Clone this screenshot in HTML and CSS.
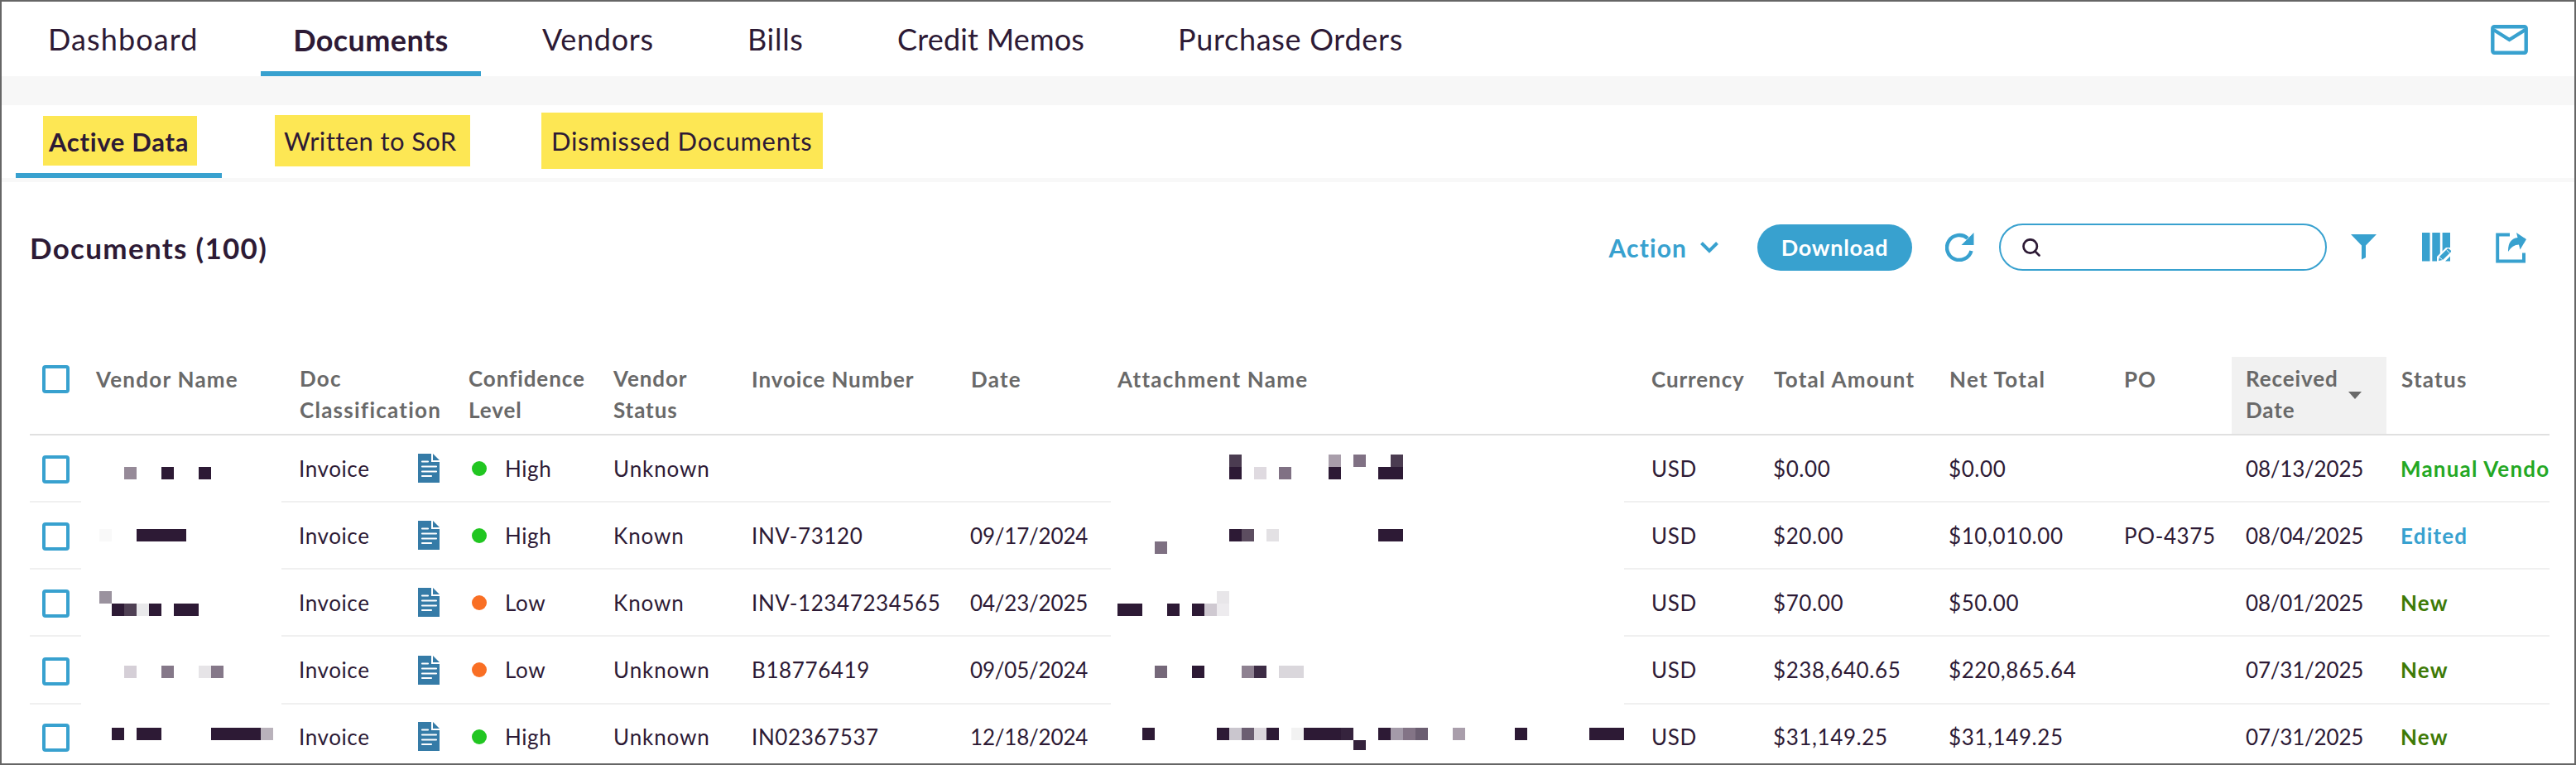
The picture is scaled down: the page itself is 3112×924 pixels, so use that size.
FILE: index.html
```html
<!DOCTYPE html>
<html lang="en">
<head>
    <meta charset="UTF-8">
    <meta name="viewport" content="width=device-width, initial-scale=1.0">
    <title>Documents</title>
    <link rel="stylesheet" href="styles.css">
</head>
<body>
    <svg class="sprite" aria-hidden="true">
        <symbol id="doc" viewBox="0 0 26 35">
            <path d="M0 0H16V10H26V35H0Z" fill="#357ba7"/>
            <path d="M18 0L26 8H18Z" fill="#357ba7"/>
            <path d="M5 9.5h7M5 15.500h17M5 21.500h17M5 27h11" stroke="#fff" stroke-width="2.200" stroke-linecap="round"/>
        </symbol>
    </svg>
    <div class="app">
        <nav class="nav">
            <a class="wide">Dashboard</a>
            <a class="active">Documents</a>
            <a>Vendors</a>
            <a>Bills</a>
            <a class="tight">Credit Memos</a>
            <a>Purchase Orders</a>
            <svg class="mail" viewBox="0 0 45 36" fill="none" stroke="#38a1cf" stroke-width="4.400">
                <rect x="2.300" y="2.300" width="40.400" height="31.400" rx="2"/>
                <path d="M3.500 6L22.500 18L41.500 6"/>
            </svg>
        </nav>
        <div class="band"></div>
        <div class="subtabs">
            <div class="tab active"><span class="mark mark-active">Active Data</span></div>
            <div class="tab"><span class="mark mark-written">Written to SoR</span></div>
            <div class="tab"><span class="mark mark-dismissed">Dismissed Documents</span></div>
        </div>

        <div class="toolbar">
            <h1>Documents (100)</h1>
            <div class="action">Action
                <svg width="22" height="14" viewBox="0 0 22 14" fill="none" stroke="#38a1cf" stroke-width="4"><path d="M1.500 1.500L11 11L20.500 1.500"/></svg>
            </div>
            <button class="download">Download</button>
            <svg class="refresh" width="35" height="35" viewBox="0 0 35 35">
                <path d="M27 6.800A15 15 0 1 0 31.500 22" fill="none" stroke="#38a1cf" stroke-width="4.400"/>
                <path d="M34.500 0V15H19.500Z" fill="#38a1cf"/>
            </svg>
            <div class="search">
                <svg width="22" height="22" viewBox="0 0 22 22" fill="none" stroke="#2d1a35" stroke-width="2.700"><circle cx="9.700" cy="9.500" r="8.200"/><path d="M15.500 15.500L20.500 20.500" stroke-linecap="round"/></svg>
            </div>
            <svg class="filter" width="31" height="31" viewBox="0 0 31 31"><path d="M0 0H31L18 13.500V28L13 30.500V13.500Z" fill="#38a1cf"/></svg>
            <svg class="columns" width="36" height="35" viewBox="0 0 36 35">
                <path d="M0 0H9.500V34.500H0ZM12.300 0H21.800V34.500H12.300ZM24.600 0H34V34.500H24.600Z" fill="#38a1cf"/>
                <path d="M18 36V29L29 18H36V36Z" fill="#fff"/>
                <path d="M20 34L21 29L30.500 19.500Q31.500 18.700 32.500 19.500L34.700 21.600Q35.500 22.600 34.700 23.500L25 33Z" fill="#38a1cf"/>
                <path d="M29.500 20.800L33.500 24.700M21 29.500L24.800 33" stroke="#fff" stroke-width="1"/>
                <path d="M28 34.500L34 28.500V34.500Z" fill="#38a1cf"/>
            </svg>
            <svg class="export" width="37" height="37" viewBox="0 0 37 37">
                <path d="M17 2.500H2.200V34.500H34V24.500" fill="none" stroke="#38a1cf" stroke-width="4"/>
                <path d="M25 0L37 8L29.500 20.500L28 14.500Q20 14.500 15 23Q14.500 7.500 26.500 6Z" fill="#38a1cf"/>
            </svg>
        </div>

        <div class="table-wrap">
            <table>
                <colgroup>
                    <col class="c-check"><col class="c-vendor"><col class="c-doc"><col class="c-conf"><col class="c-vstatus"><col class="c-inv"><col class="c-date"><col class="c-att"><col class="c-cur"><col class="c-total"><col class="c-net"><col class="c-po"><col class="c-recv"><col class="c-status">
                </colgroup>
                <thead>
                    <tr>
                        <th><span class="box"></span></th>
                        <th class="single">Vendor Name</th>
                        <th>Doc<br>Classification</th>
                        <th class="narrow">Confidence<br>Level</th>
                        <th class="narrow">Vendor<br>Status</th>
                        <th class="single narrow">Invoice Number</th>
                        <th class="single">Date</th>
                        <th class="single">Attachment Name</th>
                        <th class="single narrow">Currency</th>
                        <th class="single">Total Amount</th>
                        <th class="single">Net Total</th>
                        <th class="single narrow">PO</th>
                        <th class="sorted narrow"><div class="sort">Received<br>Date<span class="caret"></span></div></th>
                        <th class="single">Status</th>
                    </tr>
                </thead>
                <tbody>
                    <tr>
                        <td><span class="box"></span></td>
                        <td></td>
                        <td><div class="doc">Invoice <svg><use href="#doc"/></svg></div></td>
                        <td><div class="level"><i class="dot high"></i>High</div></td>
                        <td class="vs">Unknown</td>
                        <td></td>
                        <td></td>
                        <td></td>
                        <td>USD</td>
                        <td>$0.00</td>
                        <td>$0.00</td>
                        <td></td>
                        <td class="date">08/13/2025</td>
                        <td class="status manual">Manual Vendo</td>
                    </tr>
                    <tr>
                        <td><span class="box"></span></td>
                        <td></td>
                        <td><div class="doc">Invoice <svg><use href="#doc"/></svg></div></td>
                        <td><div class="level"><i class="dot high"></i>High</div></td>
                        <td class="vs">Known</td>
                        <td>INV-73120</td>
                        <td class="date">09/17/2024</td>
                        <td></td>
                        <td>USD</td>
                        <td>$20.00</td>
                        <td>$10,010.00</td>
                        <td>PO-4375</td>
                        <td class="date">08/04/2025</td>
                        <td class="status edited">Edited</td>
                    </tr>
                    <tr>
                        <td><span class="box"></span></td>
                        <td></td>
                        <td><div class="doc">Invoice <svg><use href="#doc"/></svg></div></td>
                        <td><div class="level"><i class="dot low"></i>Low</div></td>
                        <td class="vs">Known</td>
                        <td>INV-12347234565</td>
                        <td class="date">04/23/2025</td>
                        <td></td>
                        <td>USD</td>
                        <td>$70.00</td>
                        <td>$50.00</td>
                        <td></td>
                        <td class="date">08/01/2025</td>
                        <td class="status new">New</td>
                    </tr>
                    <tr class="tall">
                        <td><span class="box"></span></td>
                        <td></td>
                        <td><div class="doc">Invoice <svg><use href="#doc"/></svg></div></td>
                        <td><div class="level"><i class="dot low"></i>Low</div></td>
                        <td class="vs">Unknown</td>
                        <td>B18776419</td>
                        <td class="date">09/05/2024</td>
                        <td></td>
                        <td>USD</td>
                        <td>$238,640.65</td>
                        <td>$220,865.64</td>
                        <td></td>
                        <td class="date">07/31/2025</td>
                        <td class="status new">New</td>
                    </tr>
                    <tr class="last">
                        <td><span class="box"></span></td>
                        <td></td>
                        <td><div class="doc">Invoice <svg><use href="#doc"/></svg></div></td>
                        <td><div class="level"><i class="dot high"></i>High</div></td>
                        <td class="vs">Unknown</td>
                        <td>IN02367537</td>
                        <td class="date">12/18/2024</td>
                        <td></td>
                        <td>USD</td>
                        <td>$31,149.25</td>
                        <td>$31,149.25</td>
                        <td></td>
                        <td class="date">07/31/2025</td>
                        <td class="status new">New</td>
                    </tr>
                </tbody>
            </table>

            <!-- pixelated masks over the vendor and attachment names -->
            <svg class="mask mask-vendor" viewBox="98 527 242 395" fill="#2d1a35" shape-rendering="crispEdges">
                <rect x="98" y="527" width="242" height="395" fill="#fff"/>
                <rect x="150" y="564" width="15" height="15" fill="#968a98"/>
                <path d="M195 564h15v15h-15zM240 564h15v15h-15z"/>
                <rect x="120" y="639" width="15" height="15" fill="#f9f9f9"/>
                <path d="M165 639h60v15h-60z"/>
                <rect x="120" y="714" width="15" height="15" fill="#9a929e"/>
                <path d="M135 729h15v15h-15zM180 729h15v15h-15zM210 729h30v15h-30z"/>
                <rect x="150" y="729" width="15" height="15" fill="#4f4054"/>
                <rect x="165" y="729" width="15" height="15" fill="#e9e9eb"/>
                <rect x="150" y="804" width="15" height="15" fill="#d5cfd7"/>
                <rect x="195" y="804" width="15" height="15" fill="#857889"/>
                <rect x="240" y="804" width="15" height="15" fill="#e6e4e7"/>
                <rect x="255" y="804" width="15" height="15" fill="#857889"/>
                <path d="M135 879h15v15h-15zM165 879h30v15h-30zM255 879h60v15h-60z"/>
                <rect x="315" y="879" width="15" height="15" fill="#b9b2bb"/>
            </svg>
            <svg class="mask mask-attachment" viewBox="1342 527 620 395" fill="#2d1a35" shape-rendering="crispEdges">
                <rect x="1342" y="527" width="620" height="395" fill="#fff"/>
                <path d="M1485 549h15v15h-15zM1680 549h15v15h-15z" fill="#4b3c51"/>
                <rect x="1605" y="549" width="15" height="15" fill="#a99eab"/>
                <path d="M1635 549h15v15h-15zM1545 564h15v15h-15z" fill="#807184"/>
                <path d="M1485 564h15v15h-15zM1605 564h15v15h-15zM1665 564h30v15h-30z"/>
                <rect x="1515" y="564" width="15" height="15" fill="#dfdae0"/>
                <path d="M1485 639h15v15h-15zM1665 639h30v15h-30z"/>
                <rect x="1500" y="639" width="15" height="15" fill="#5c4d60"/>
                <rect x="1530" y="639" width="15" height="15" fill="#e3e1e4"/>
                <rect x="1395" y="654" width="15" height="15" fill="#7e7082"/>
                <rect x="1470" y="714" width="15" height="15" fill="#e8e6e9"/>
                <path d="M1350 729h30v15h-30zM1410 729h15v15h-15zM1440 729h15v15h-15z"/>
                <rect x="1455" y="729" width="15" height="15" fill="#cfc9d1"/>
                <rect x="1470" y="729" width="15" height="15" fill="#edebee"/>
                <rect x="1395" y="804" width="15" height="15" fill="#756879"/>
                <rect x="1440" y="804" width="15" height="15"/>
                <rect x="1500" y="804" width="15" height="15" fill="#8e8191"/>
                <rect x="1515" y="804" width="15" height="15" fill="#3d2c45"/>
                <rect x="1545" y="804" width="30" height="15" fill="#dad7dc"/>
                <path d="M1380 879h15v15h-15zM1470 879h15v15h-15zM1530 879h15v15h-15zM1575 879h45v15h-45zM1665 879h15v15h-15zM1830 879h15v15h-15zM1920 879h42v15h-42z"/>
                <rect x="1485" y="879" width="15" height="15" fill="#cac6ce"/>
                <rect x="1500" y="879" width="15" height="15" fill="#6b5e71"/>
                <rect x="1515" y="879" width="15" height="15" fill="#dbd6dc"/>
                <rect x="1560" y="879" width="15" height="15" fill="#f2f2f2"/>
                <path d="M1620 879h15v15h-15zM1635 894h15v12h-15z" fill="#35233d"/>
                <rect x="1680" y="879" width="15" height="15" fill="#a49ba9"/>
                <rect x="1695" y="879" width="15" height="15" fill="#837486"/>
                <rect x="1710" y="879" width="15" height="15" fill="#6b5e71"/>
                <rect x="1755" y="879" width="15" height="15" fill="#a99eab"/>
            </svg>
        </div>
    </div>
</body>
</html>
```
FILE: styles.css
```css
* {
    box-sizing: border-box;
}
body {
    margin: 0;
    font-family: Lato, "Open Sans", sans-serif;
    font-size: 26px;
    color: #2d1a35;
    background: #fff;
}
svg {
    display: block;
    flex: none;
}
.sprite {
    display: none;
}
.app {
    height: 924px;
    border: 2px solid #666;
    overflow: hidden;
}

/* main navigation */
.nav {
    display: grid;
    grid-template-columns: 257px 340px 248px 181px 339px 1fr 45px;
    height: 90px;
    padding: 0 56px 0 56px;
    font-size: 36px;
    line-height: 91px;
    letter-spacing: 0.7px;
}
.nav a.wide {
    letter-spacing: 1.1px;
}
.nav a.tight {
    letter-spacing: 0.2px;
}
.nav a.active {
    width: 266px;
    text-align: center;
    font-weight: 700;
    line-height: 93px;
    letter-spacing: 0.4px;
    border-bottom: 6px solid #38a1cf;
    height: 90px;
}
.mail {
    width: 45px;
    height: 36px;
    margin-top: 28px;
}
.band {
    height: 35px;
    background: #f7f7f7;
}

/* sub tabs */
.subtabs {
    display: flex;
    height: 93px;
    padding-left: 17px;
    border-bottom: 5px solid #f8f8f8;
    font-size: 31px;
    letter-spacing: 0.7px;
}
.tab {
    display: flex;
    align-items: center;
    height: 88px;
}
.tab.active {
    width: 249px;
    margin-right: 64px;
    padding: 4px 0 0 33px;
    font-weight: 700;
    border-bottom: 6px solid #38a1cf;
}
.mark {
    background: #fde754;
    white-space: nowrap;
}
.mark-active {
    width: 186px;
    height: 60px;
    padding-left: 7px;
    line-height: 62px;
}
.mark-written {
    width: 236px;
    height: 62px;
    margin: 0 86px 2px 0;
    padding-left: 11px;
    line-height: 63px;
    letter-spacing: 0.4px;
}
.mark-dismissed {
    width: 340px;
    height: 68px;
    margin-bottom: 2px;
    padding-left: 12px;
    line-height: 69px;
}

/* toolbar */
.toolbar {
    display: flex;
    align-items: center;
    height: 57px;
    margin: 50px 58px 104px 34px;
}
h1 {
    flex: 1;
    margin: 0;
    font-size: 35px;
    line-height: 56px;
    letter-spacing: 1.3px;
}
.action {
    display: flex;
    align-items: center;
    gap: 16px;
    margin-right: 47px;
    font-size: 30px;
    font-weight: 700;
    letter-spacing: 1.1px;
    color: #38a1cf;
}
.download {
    width: 187px;
    height: 56px;
    padding: 0;
    border: 0;
    border-radius: 28px;
    background: #38a1cf;
    color: #fff;
    font: 700 27px Lato, sans-serif;
    letter-spacing: 0.7px;
}
.refresh {
    margin: 0 30px 0 40px;
}
.search {
    display: flex;
    align-items: center;
    width: 396px;
    height: 57px;
    padding-left: 26px;
    border: 2px solid #38a1cf;
    border-radius: 29px;
}
.filter {
    margin: 0 55px 0 29px;
}
.columns {
    margin-right: 53px;
}
.export {
    margin-top: 2px;
}

/* documents table */
.table-wrap {
    position: relative;
    margin-left: 34px;
    width: 3044px;
}
table {
    width: 3044px;
    table-layout: fixed;
    border-collapse: separate;
    border-spacing: 0;
}
.c-check { width: 62px; }
.c-vendor { width: 246px; }
.c-doc { width: 205px; }
.c-conf { width: 175px; }
.c-vstatus { width: 167px; }
.c-inv { width: 264px; }
.c-date { width: 177px; }
.c-att { width: 646px; }
.c-cur { width: 147px; }
.c-total { width: 212px; }
.c-net { width: 212px; }
.c-po { width: 147px; }
.c-recv { width: 187px; }
.c-status { width: 197px; }
th {
    height: 95px;
    padding: 7px 0 0 18px;
    border-bottom: 2px solid #e0e0e0;
    color: #696969;
    font-weight: 700;
    line-height: 38px;
    letter-spacing: 1.25px;
    text-align: left;
    vertical-align: top;
    white-space: nowrap;
    font-variant-ligatures: none;
}
th.single {
    padding-top: 8px;
}
th.narrow {
    padding-left: 17px;
    letter-spacing: 0.9px;
}
th.sorted {
    background: #f1f1f1;
}
.sort {
    position: relative;
}
.caret {
    position: absolute;
    left: 124px;
    top: 35px;
    border: 8px solid transparent;
    border-top: 9px solid #696969;
    border-bottom: 0;
}
td {
    height: 81px;
    padding: 0 0 0 17px;
    border-bottom: 2px solid #f0f0f0;
    letter-spacing: 0.6px;
    white-space: nowrap;
}
.tall td {
    height: 82px;
}
.last td {
    height: 79px;
}
th:first-child,
td:first-child {
    padding-left: 15px;
}
th:first-child {
    padding-top: 10px;
}
.box {
    display: block;
    width: 33px;
    height: 34px;
    border: 4px solid #38a1cf;
    border-radius: 4px;
}
td .box {
    margin-top: 3px;
}
.doc {
    display: flex;
    align-items: center;
    justify-content: space-between;
    padding-right: 18px;
}
.doc svg {
    width: 26px;
    height: 35px;
}
.level {
    display: flex;
    align-items: center;
    padding-left: 4px;
}
.dot {
    width: 18px;
    height: 18px;
    margin-right: 22px;
    border-radius: 50%;
}
.dot.high { background: #21c621; }
.dot.low { background: #f96f24; }
.vs {
    letter-spacing: 0.9px;
}
.date {
    letter-spacing: -0.2px;
}
.status {
    font-weight: 700;
    letter-spacing: 1.2px;
}
.manual { color: #24a824; }
.edited { color: #38a1cf; }
.new { color: #3e7a06; }

.mask {
    position: absolute;
    top: 96px;
    height: 395px;
}
.mask-vendor {
    left: 62px;
    width: 242px;
}
.mask-attachment {
    left: 1306px;
    width: 620px;
}
```
